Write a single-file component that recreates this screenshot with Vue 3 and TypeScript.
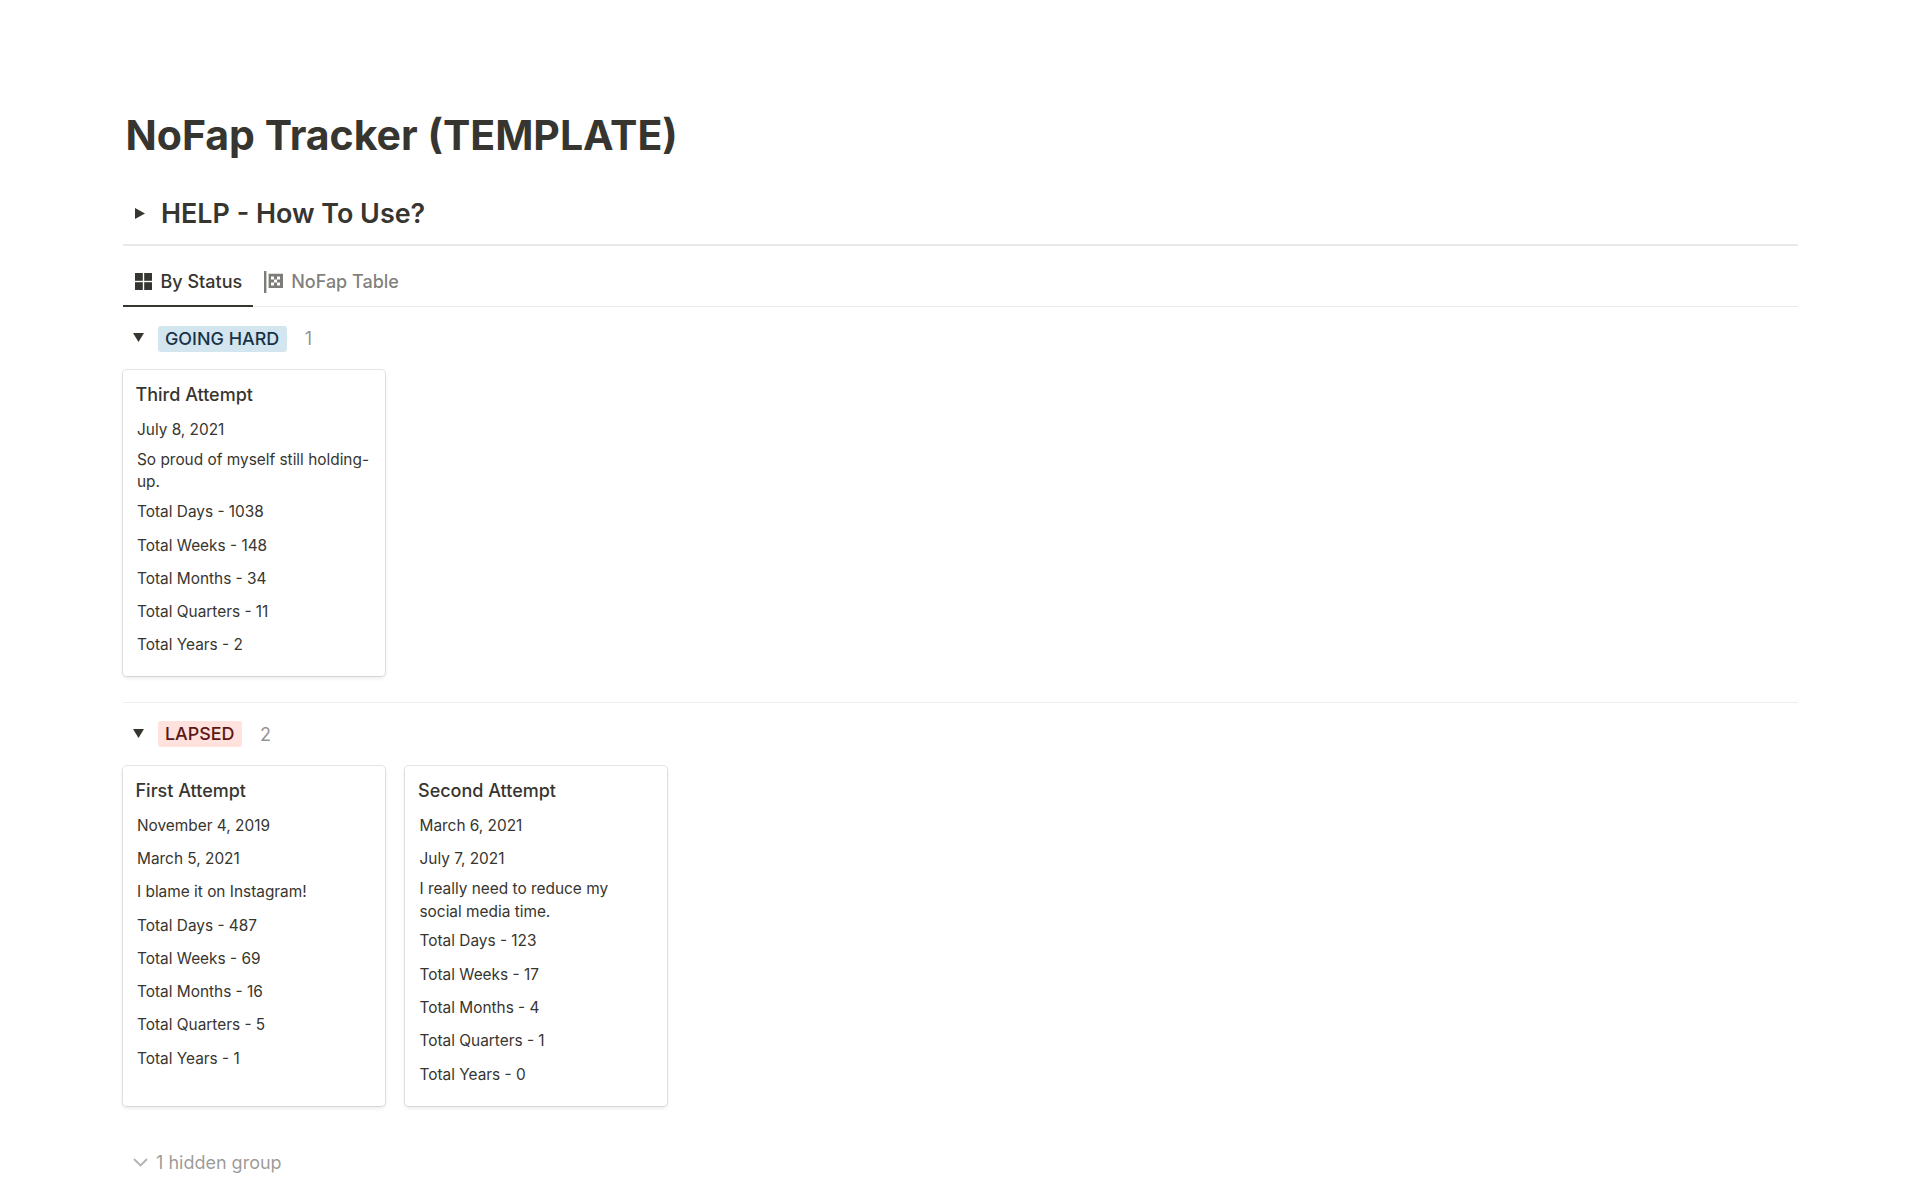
<script setup lang="ts">
interface Prop { text: string; wrap?: boolean }
interface Card { title: string; props: Prop[] }
interface Group { name: string; tone: string; cards: Card[] }

function totals(d: number, w: number, m: number, q: number, y: number): Prop[] {
  return [
    { text: `Total Days - ${d}` },
    { text: `Total Weeks - ${w}` },
    { text: `Total Months - ${m}` },
    { text: `Total Quarters - ${q}` },
    { text: `Total Years - ${y}` },
  ]
}

const groups: Group[] = [
  {
    name: 'GOING HARD',
    tone: 'blue',
    cards: [
      {
        title: 'Third Attempt',
        props: [
          { text: 'July 8, 2021' },
          { text: 'So proud of myself still holding-up.', wrap: true },
          ...totals(1038, 148, 34, 11, 2),
        ],
      },
    ],
  },
  {
    name: 'LAPSED',
    tone: 'red',
    cards: [
      {
        title: 'First Attempt',
        props: [
          { text: 'November 4, 2019' },
          { text: 'March 5, 2021' },
          { text: 'I blame it on Instagram!' },
          ...totals(487, 69, 16, 5, 1),
        ],
      },
      {
        title: 'Second Attempt',
        props: [
          { text: 'March 6, 2021' },
          { text: 'July 7, 2021' },
          { text: 'I really need to reduce my social media time.', wrap: true },
          ...totals(123, 17, 4, 1, 0),
        ],
      },
    ],
  },
]
</script>

<template>
  <main class="page">
    <h1 class="title">NoFap Tracker (TEMPLATE)</h1>

    <div class="toggle">
      <svg class="toggle-arrow" viewBox="0 0 10 11"><path d="M0 0v11l10-5.5z" /></svg>
      <h2 class="toggle-text">HELP - How To Use?</h2>
    </div>
    <div class="rule"></div>

    <nav class="tabs">
      <div class="tab active">
        <svg class="tab-icon" viewBox="0 0 17 17">
          <rect width="7.8" height="7.8" />
          <rect x="9.2" width="7.8" height="7.8" />
          <rect y="9.2" width="7.8" height="7.8" />
          <rect x="9.2" y="9.2" width="7.8" height="7.8" />
        </svg>
        <span>By Status</span>
      </div>
      <div class="tab">
        <svg class="tab-icon table-icon" viewBox="0 0 19 22">
          <rect width="2.4" height="22" />
          <path
            fill-rule="evenodd"
            d="M4.6 2.7h14.4v14.4H4.6zM7 5.4v3h3v-3zm6 0v3h3v-3zM10 8.4v3h3v-3zM7 11.4v3h3v-3zm6 0v3h3v-3z"
          />
        </svg>
        <span>NoFap Table</span>
      </div>
    </nav>

    <section v-for="(group, gi) in groups" :key="group.name" class="group" :class="{ divided: gi > 0 }">
      <header class="group-head">
        <svg class="group-arrow" viewBox="0 0 11 9"><path d="M0 0h11L5.5 9z" /></svg>
        <span class="tag" :class="group.tone">{{ group.name }}</span>
        <span class="count">{{ group.cards.length }}</span>
      </header>
      <div class="cards">
        <article v-for="card in group.cards" :key="card.title" class="card">
          <div class="card-title">{{ card.title }}</div>
          <div v-for="p in card.props" :key="p.text" class="prop" :class="{ wrap: p.wrap }">{{ p.text }}</div>
        </article>
      </div>
    </section>

    <div class="hidden-groups">
      <svg class="chev" viewBox="0 0 15 9"><path d="M1 1l6.5 6.5L14 1" /></svg>
      <span>1 hidden group</span>
    </div>
  </main>
</template>

<style scoped>
.page {
  box-sizing: border-box;
  width: 1920px;
  height: 1199px;
  padding: 109.5px 122px 0 122.5px;
  font-family: Inter, "Liberation Sans", sans-serif;
  color: #37352f;
  overflow: hidden;
}
.title {
  margin: 0 0 0 3px;
  font-size: 41px;
  line-height: 50px;
  font-weight: 700;
  color: #37352f;
}
.toggle {
  display: flex;
  align-items: center;
  height: 40px;
  margin-top: 33.5px;
}
.toggle-arrow {
  width: 10px;
  height: 11px;
  margin-left: 12px;
  fill: #37352f;
}
.toggle-text {
  margin: 0 0 0 16.5px;
  font-size: 26.9px;
  line-height: 40px;
  font-weight: 600;
}
.rule {
  height: 2px;
  margin-top: 11px;
  background: #e9e9e7;
}
.tabs {
  display: flex;
  box-sizing: border-box;
  height: 61px;
  padding-top: 10px;
  border-bottom: 1px solid #e9e9e7;
}
.tab {
  display: flex;
  align-items: center;
  gap: 9px;
  padding: 0 11px 0 12px;
  font-size: 18px;
  font-weight: 450;
  color: rgba(55, 53, 47, 0.65);
  margin-bottom: -1px;
}
.tab.active {
  color: #37352f;
  border-bottom: 2px solid #37352f;
  padding-top: 2px;
}
.tab-icon {
  width: 17px;
  height: 17px;
  fill: #37352f;
}
.tab .table-icon {
  width: 19px;
  height: 22px;
  margin-left: -1px;
  margin-right: -1px;
  fill: rgba(55, 53, 47, 0.65);
}
.group {
  display: flex;
  flex-direction: column;
}
.divided {
  margin-top: 25.5px;
  border-top: 1px solid #eeeeed;
}
.group-head {
  display: flex;
  align-items: center;
  height: 63px;
}
.group-arrow {
  width: 11px;
  height: 9px;
  margin-left: 10px;
  margin-top: -2px;
  fill: #37352f;
}
.tag {
  margin-left: 14px;
  padding: 0 7.5px;
  height: 26px;
  line-height: 26px;
  border-radius: 3px;
  font-size: 17.9px;
  font-weight: 450;
}
.tag.blue {
  background: #d3e5ef;
  color: #183347;
}
.tag.red {
  background: #ffe2dd;
  color: #5d1715;
}
.count {
  margin-left: 18px;
  font-size: 18px;
  color: rgba(55, 53, 47, 0.55);
}
.cards {
  display: flex;
  gap: 20.5px;
  align-items: stretch;
}
.card {
  box-sizing: border-box;
  width: 262px;
  padding: 11px 14.5px 14px;
  border-radius: 4px;
  background: #fff;
  box-shadow: 0 0 0 1px rgba(15, 15, 15, 0.1), 0 2px 4px rgba(15, 15, 15, 0.1);
}
.card-title {
  margin-left: -1.5px;
  font-size: 18px;
  line-height: 27px;
  font-weight: 450;
  margin-bottom: 5.5px;
}
.prop {
  font-size: 15.4px;
  line-height: 22.6px;
  padding: 5.35px 0;
  color: #37352f;
}
.prop.wrap {
  padding: 2px 0;
}
.hidden-groups {
  display: flex;
  align-items: center;
  gap: 8.5px;
  margin-top: 46px;
  margin-left: 10px;
  font-size: 18px;
  color: rgba(55, 53, 47, 0.5);
}
.chev {
  width: 15px;
  height: 9px;
  fill: none;
  stroke: rgba(55, 53, 47, 0.38);
  stroke-width: 1.8;
}
</style>
